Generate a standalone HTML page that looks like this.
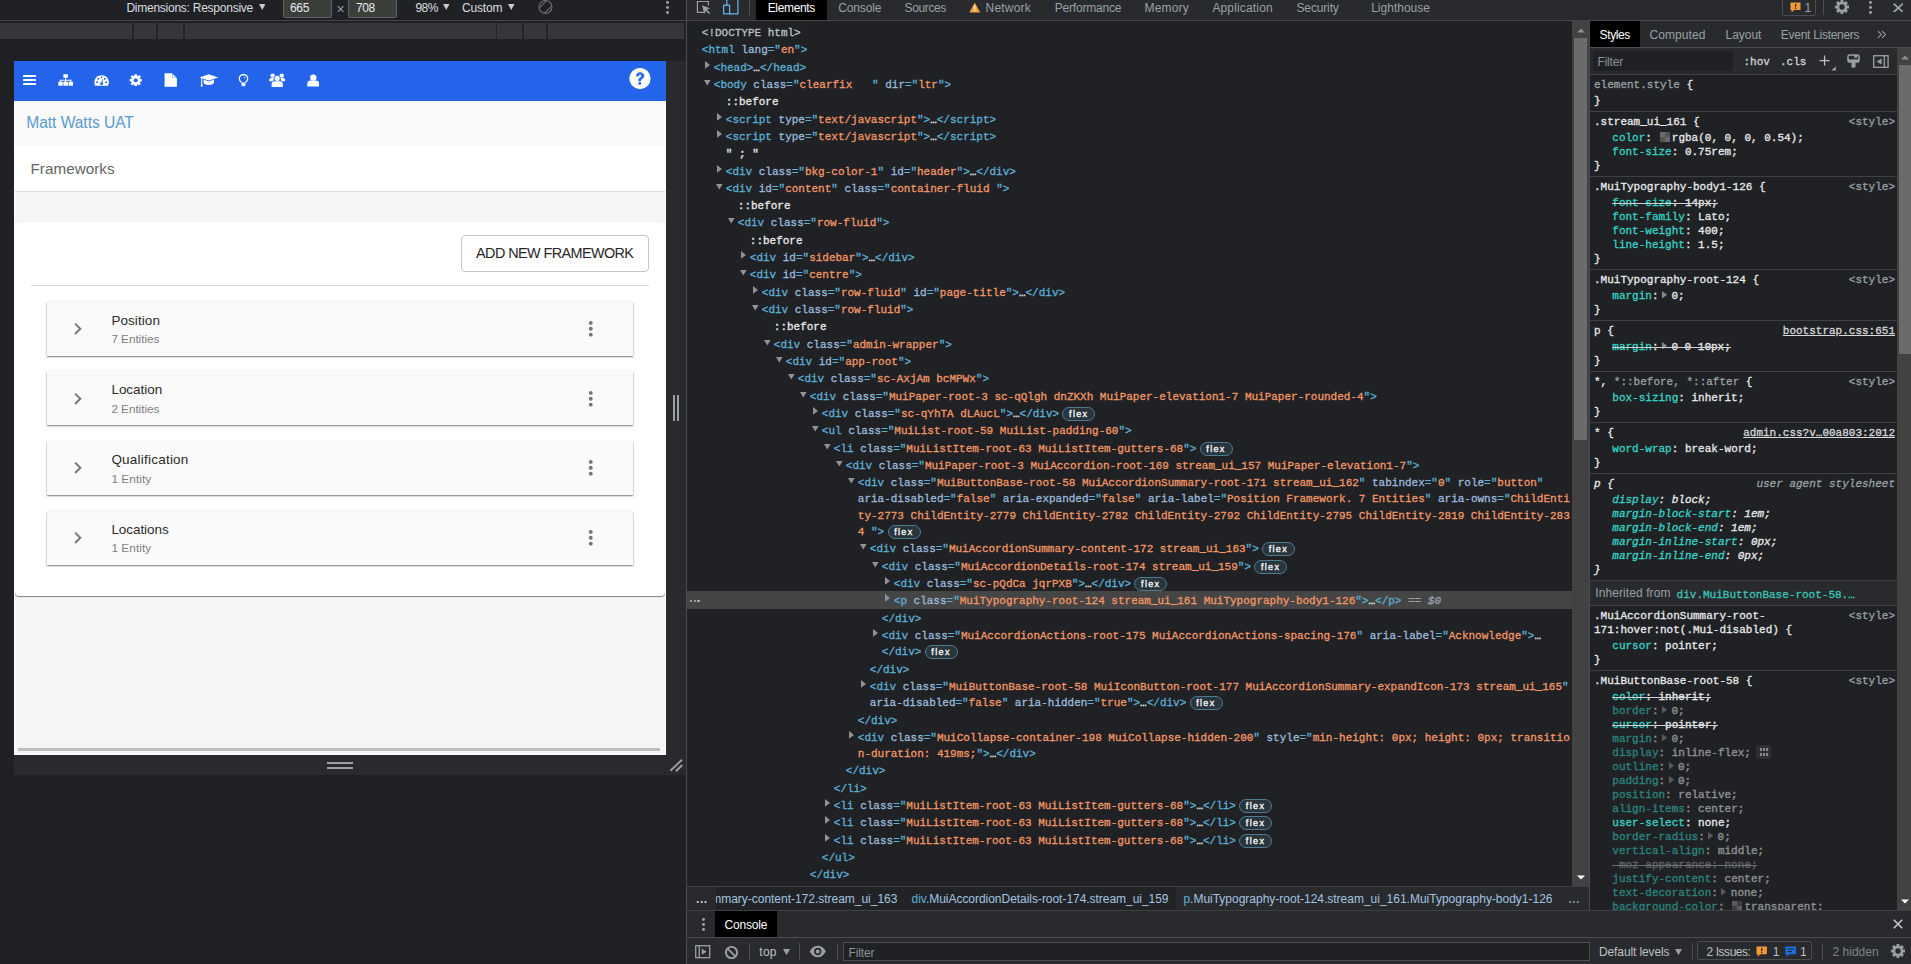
<!DOCTYPE html>
<html><head><meta charset="utf-8"><title>DevTools</title><style>
html,body{margin:0;padding:0;}
body{width:1911px;height:964px;overflow:hidden;background:#202124;position:relative;font-family:"Liberation Sans", sans-serif;}
.a{position:absolute;display:block;white-space:pre;}
.s{font-family:"Liberation Sans", sans-serif;}
.m{font-family:"Liberation Mono", monospace;-webkit-text-stroke:0.3px;}
i.tg{font-style:normal;color:#5db0d7} i.an{font-style:normal;color:#9bbbdc} i.av{font-style:normal;color:#f29766} i.tx{font-style:normal;color:#e8eaed}
i.pn{font-style:inherit;color:#35d4c7} i.pv{font-style:inherit;color:#e8eaed} i.gr{font-style:inherit;color:#9aa0a6}
</style></head><body>
<div class="a" style="left:0px;top:0px;width:686px;height:20px;background:#202124;"></div>
<div class="a" style="left:0px;top:20px;width:1911px;height:1px;background:#45474b;"></div>
<span id="t1" class="a s" style="left:126.40px;top:0.00px;font-size:12px;line-height:16px;color:#dadce0;letter-spacing:-0.248px;">Dimensions: Responsive</span>
<svg class="a" style="left:258.5px;top:4px;" width="6.5" height="6" viewBox="0 0 6.5 6" preserveAspectRatio="none"><path d="M0 0H6.5L3.25 6Z" fill="#c8cacd"/></svg>
<div class="a" style="left:283.4px;top:-3px;width:48.4px;height:20.6px;background:#3b3f3a;border:1px solid #5f6368;border-radius:2px;box-sizing:border-box;"></div>
<span id="t2" class="a s" style="left:290.00px;top:0.00px;font-size:12px;line-height:16px;color:#e8eaed;letter-spacing:-0.344px;">665</span>
<span id="t3" class="a s" style="left:336.50px;top:1.40px;font-size:14px;line-height:16px;color:#9aa0a6;">×</span>
<div class="a" style="left:348.2px;top:-3px;width:48.6px;height:20.6px;background:#3b3f3a;border:1px solid #5f6368;border-radius:2px;box-sizing:border-box;"></div>
<span id="t4" class="a s" style="left:356.00px;top:0.00px;font-size:12px;line-height:16px;color:#e8eaed;letter-spacing:-0.410px;">708</span>
<span id="t5" class="a s" style="left:415.40px;top:0.00px;font-size:12px;line-height:16px;color:#dadce0;letter-spacing:-0.477px;">98%</span>
<svg class="a" style="left:443.4px;top:4px;" width="6.5" height="6" viewBox="0 0 6.5 6" preserveAspectRatio="none"><path d="M0 0H6.5L3.25 6Z" fill="#c8cacd"/></svg>
<span id="t6" class="a s" style="left:462.00px;top:0.00px;font-size:12px;line-height:16px;color:#dadce0;letter-spacing:-0.157px;">Custom</span>
<svg class="a" style="left:508.4px;top:4px;" width="6.5" height="6" viewBox="0 0 6.5 6" preserveAspectRatio="none"><path d="M0 0H6.5L3.25 6Z" fill="#c8cacd"/></svg>
<svg class="a" style="left:537.5px;top:-1.1px;" width="15" height="16" viewBox="0 0 15 16" preserveAspectRatio="none"><g fill="none" stroke="#6e7175" stroke-width="1.1"><circle cx="7.5" cy="8" r="6.5"/><path d="M1.6 8.6L8.6 1.7M6.4 14.3L13.4 7.4"/></g></svg>
<div class="a" style="left:666.1px;top:1.1px;width:2.8px;height:2.8px;background:#9aa0a6;border-radius:50%;"></div>
<div class="a" style="left:666.1px;top:6.199999999999999px;width:2.8px;height:2.8px;background:#9aa0a6;border-radius:50%;"></div>
<div class="a" style="left:666.1px;top:11.2px;width:2.8px;height:2.8px;background:#9aa0a6;border-radius:50%;"></div>
<div class="a" style="left:0px;top:23px;width:684px;height:16px;background:#35363a;"></div>
<div class="a" style="left:132.4px;top:23px;width:1.6px;height:16px;background:#232427;"></div>
<div class="a" style="left:156.4px;top:23px;width:1.6px;height:16px;background:#232427;"></div>
<div class="a" style="left:183.4px;top:23px;width:1.6px;height:16px;background:#232427;"></div>
<div class="a" style="left:495.6px;top:23px;width:1.6px;height:16px;background:#232427;"></div>
<div class="a" style="left:522.4px;top:23px;width:1.6px;height:16px;background:#232427;"></div>
<div class="a" style="left:546.4px;top:23px;width:1.6px;height:16px;background:#232427;"></div>
<div class="a" style="left:666px;top:61px;width:20px;height:714px;background:#292a2d;"></div>
<div class="a" style="left:14px;top:755px;width:652px;height:20px;background:#292a2d;"></div>
<div class="a" style="left:686px;top:0px;width:1px;height:964px;background:#494c50;"></div>
<div class="a" style="left:673.4px;top:395px;width:2px;height:26px;background:#9aa0a6;"></div>
<div class="a" style="left:677px;top:395px;width:2px;height:26px;background:#9aa0a6;"></div>
<div class="a" style="left:327px;top:762.4px;width:26px;height:2px;background:#9aa0a6;"></div>
<div class="a" style="left:327px;top:766.7px;width:26px;height:2px;background:#9aa0a6;"></div>
<svg class="a" style="left:668px;top:757px;" width="16" height="16" viewBox="0 0 16 16" preserveAspectRatio="none"><path d="M2.4 13.8L14 2.7M7.9 14.3L14.3 8.0" stroke="#9aa0a6" stroke-width="1.9" fill="none"/></svg>
<div class="a" style="left:14px;top:61px;width:652px;height:694px;background:#f5f5f5;"></div>
<div class="a" style="left:14px;top:61px;width:652px;height:40px;background:#2464ea;"></div>
<div class="a" style="left:14px;top:101px;width:652px;height:45px;background:#fafafa;"></div>
<div class="a" style="left:14px;top:146px;width:652px;height:45px;background:#ffffff;border-bottom:1px solid #dcdcdc;"></div>
<div class="a" style="left:15px;top:222px;width:650px;height:374px;background:#ffffff;border-radius:4px;box-shadow:0 1px 1px rgba(0,0,0,.45),0 0 1px rgba(0,0,0,.2);"></div>
<div class="a" style="left:30.5px;top:285px;width:618.5px;height:1px;background:#d6d6d6;"></div>
<div class="a" style="left:461px;top:235px;width:188px;height:36.5px;background:#ffffff;border:1px solid #c6c6c6;border-radius:4px;box-sizing:border-box;"></div>
<span id="t7" class="a s" style="left:476.10px;top:245.20px;font-size:14.4px;line-height:16px;color:#262626;letter-spacing:-0.576px;">ADD NEW FRAMEWORK</span>
<span id="t8" class="a s" style="left:26.30px;top:114.60px;font-size:15.6px;line-height:16px;color:#5a9bd0;letter-spacing:-0.057px;">Matt Watts UAT</span>
<span id="t9" class="a s" style="left:30.50px;top:160.80px;font-size:15.2px;line-height:16px;color:#666666;letter-spacing:0.065px;">Frameworks</span>
<div class="a" style="left:23.3px;top:74.9px;width:12.9px;height:2.2px;background:#ffffff;border-radius:.4px;"></div>
<div class="a" style="left:23.3px;top:78.9px;width:12.9px;height:2.2px;background:#ffffff;border-radius:.4px;"></div>
<div class="a" style="left:23.3px;top:82.9px;width:12.9px;height:2.2px;background:#ffffff;border-radius:.4px;"></div>
<svg class="a" style="left:57.6px;top:73.8px;" width="15.3" height="12.2" viewBox="0 0 16 13" preserveAspectRatio="none"><g fill="#ffffff"><rect x="5.6" y="0.3" width="4.8" height="3.8" rx=".4"/><rect x="0.3" y="8.2" width="4.7" height="4.3" rx=".4"/><rect x="5.65" y="8.2" width="4.7" height="4.3" rx=".4"/><rect x="11" y="8.2" width="4.7" height="4.3" rx=".4"/><path d="M7.5 4h1v2.2h5.6v2.2h-1V7.1H8.5v1.3h-1V7.1H2.9v1.3h-1V6.2h5.6z"/></g></svg>
<svg class="a" style="left:93.8px;top:74.7px;" width="15.2" height="11.3" viewBox="0 0 16 12" preserveAspectRatio="none"><path fill="#ffffff" d="M8 0.2A7.6 7.6 0 0 0 1.3 11.5H14.7A7.6 7.6 0 0 0 8 0.2Z"/><g fill="#2464ea"><circle cx="3.2" cy="7.6" r="1"/><circle cx="4.6" cy="4" r="1"/><circle cx="8" cy="2.5" r=".9"/><circle cx="11.4" cy="4" r="1"/><circle cx="12.8" cy="7.6" r="1"/><circle cx="8" cy="9.2" r="1.5"/><path d="M7.6 9L8.6 4.4l.8.2L8.6 9.3z"/></g></svg>
<svg class="a" style="left:129.3px;top:73.5px;" width="13.7" height="12.7" viewBox="0 0 14 13" preserveAspectRatio="none"><path fill="#ffffff" d="M13.17 5.13L13.17 7.67L11.39 7.79L11.06 8.59L12.23 9.94L10.44 11.73L9.09 10.56L8.29 10.89L8.17 12.67L5.63 12.67L5.51 10.89L4.71 10.56L3.36 11.73L1.57 9.94L2.74 8.59L2.41 7.79L0.63 7.67L0.63 5.13L2.41 5.01L2.74 4.21L1.57 2.86L3.36 1.07L4.71 2.24L5.51 1.91L5.63 0.13L8.17 0.13L8.29 1.91L9.09 2.24L10.44 1.07L12.23 2.86L11.06 4.21L11.39 5.01Z"/><circle cx="6.9" cy="6.4" r="2.1" fill="#2464ea"/></svg>
<svg class="a" style="left:164.3px;top:72.8px;" width="13.7" height="14.6" viewBox="0 0 14 15" preserveAspectRatio="none"><path fill="#ffffff" d="M0.6 0.3H8L13.2 5.4V14.2H0.6Z"/><path fill="#2464ea" d="M8.3 0.3V5.1H13.2" opacity=".55"/><path fill="#ffffff" d="M9 1.2V4.5H12.4Z"/></svg>
<svg class="a" style="left:199px;top:73.6px;" width="19.5" height="13" viewBox="0 0 19.5 13" preserveAspectRatio="none"><g fill="#ffffff"><path d="M9.8 0.3L19.2 3.4L9.8 6.5L0.4 3.4Z"/><path d="M4.6 5.6L9.8 7.4L15 5.6V8.6C15 10 12.6 10.9 9.8 10.9S4.6 10 4.6 8.6Z"/><path d="M2.2 4.2h1v5.2l.6 3.2H1.6l.6-3.2z"/></g></svg>
<svg class="a" style="left:238.4px;top:73.6px;" width="11" height="13" viewBox="0 0 11 13" preserveAspectRatio="none"><path fill="none" stroke="#ffffff" stroke-width="1.3" d="M3.6 8.6C2.2 7.4 1.3 6.3 1.3 4.7a4.2 4.2 0 0 1 8.4 0c0 1.6-.9 2.7-2.3 3.9"/><rect x="3.5" y="8.6" width="4" height="3.6" rx="1.2" fill="#ffffff"/><path d="M5.6 3.1a1.8 1.8 0 0 1 1.6 1.5" stroke="#ffffff" stroke-width=".7" fill="none"/></svg>
<svg class="a" style="left:269.3px;top:72.8px;" width="16.4" height="14.6" viewBox="0 0 16.4 14.6" preserveAspectRatio="none"><g fill="#ffffff"><circle cx="3.6" cy="2.6" r="2.2"/><circle cx="12.8" cy="2.6" r="2.2"/><path d="M0.3 8.2V6.6A1.9 1.9 0 0 1 2.2 4.9H5L4 8.2Z"/><path d="M16.1 8.2V6.6A1.9 1.9 0 0 0 14.2 4.9H11.4L12.4 8.2Z"/><circle cx="8.2" cy="5.4" r="2.9" stroke="#2464ea" stroke-width=".5"/><path d="M2.6 14.3V11.2A3 3 0 0 1 5.6 8.3H10.8A3 3 0 0 1 13.8 11.2V14.3Z"/></g></svg>
<svg class="a" style="left:306.6px;top:73.6px;" width="12.6" height="13" viewBox="0 0 12.6 13" preserveAspectRatio="none"><g fill="#ffffff"><circle cx="6.3" cy="3.6" r="3.2"/><path d="M0.3 12.4V9.8A3.4 3.4 0 0 1 3.7 6.4H8.9A3.4 3.4 0 0 1 12.3 9.8V12.4Z"/></g></svg>
<svg class="a" style="left:629px;top:68px;" width="22" height="22" viewBox="0 0 22 22" preserveAspectRatio="none"><circle cx="11" cy="10.6" r="10.6" fill="#ffffff"/><path fill="#2464ea" stroke="#2464ea" stroke-width=".5" d="M7.2 8.1c.2-2.3 1.7-3.6 3.9-3.6 2.3 0 3.9 1.3 3.9 3.3 0 1.4-.7 2.2-1.9 3-.9.6-1.2 1-1.2 1.9v.4H9.6v-.7c0-1.3.5-2.1 1.6-2.8.9-.6 1.3-1 1.3-1.7 0-.8-.6-1.3-1.5-1.3-1 0-1.6.6-1.7 1.6z"/><rect x="9.5" y="14.2" width="2.5" height="2.5" fill="#2464ea"/></svg>
<div class="a" style="left:46.6px;top:301.5px;width:586.6px;height:54px;background:#fafafa;box-shadow:0 1px 1.5px rgba(0,0,0,.5),0 0 1px rgba(0,0,0,.15);"></div>
<svg class="a" style="left:65.9px;top:316.94px;" width="23.52" height="23.52" viewBox="0 0 24 24" preserveAspectRatio="none"><path d="M10 6L8.59 7.41 13.17 12l-4.58 4.59L10 18l6-6z" fill="#757575"/></svg>
<svg class="a" style="left:578.8px;top:316.94px;" width="23.52" height="23.52" viewBox="0 0 24 24" preserveAspectRatio="none"><circle cx="12" cy="6" r="2" fill="#757575"/><circle cx="12" cy="12" r="2" fill="#757575"/><circle cx="12" cy="18" r="2" fill="#757575"/></svg>
<span id="t10" class="a s" style="left:111.40px;top:312.50px;font-size:13.5px;line-height:16px;color:#2b2b2b;letter-spacing:0.071px;">Position</span>
<span id="t11" class="a s" style="left:111.40px;top:331.18px;font-size:11.8px;line-height:16px;color:#7d7d7d;letter-spacing:-0.063px;">7 Entities</span>
<div class="a" style="left:46.6px;top:371.25px;width:586.6px;height:54px;background:#fafafa;box-shadow:0 1px 1.5px rgba(0,0,0,.5),0 0 1px rgba(0,0,0,.15);"></div>
<svg class="a" style="left:65.9px;top:386.69px;" width="23.52" height="23.52" viewBox="0 0 24 24" preserveAspectRatio="none"><path d="M10 6L8.59 7.41 13.17 12l-4.58 4.59L10 18l6-6z" fill="#757575"/></svg>
<svg class="a" style="left:578.8px;top:386.69px;" width="23.52" height="23.52" viewBox="0 0 24 24" preserveAspectRatio="none"><circle cx="12" cy="6" r="2" fill="#757575"/><circle cx="12" cy="12" r="2" fill="#757575"/><circle cx="12" cy="18" r="2" fill="#757575"/></svg>
<span id="t12" class="a s" style="left:111.40px;top:382.25px;font-size:13.5px;line-height:16px;color:#2b2b2b;letter-spacing:-0.018px;">Location</span>
<span id="t13" class="a s" style="left:111.40px;top:400.93px;font-size:11.8px;line-height:16px;color:#7d7d7d;letter-spacing:-0.063px;">2 Entities</span>
<div class="a" style="left:46.6px;top:441.0px;width:586.6px;height:54px;background:#fafafa;box-shadow:0 1px 1.5px rgba(0,0,0,.5),0 0 1px rgba(0,0,0,.15);"></div>
<svg class="a" style="left:65.9px;top:456.44px;" width="23.52" height="23.52" viewBox="0 0 24 24" preserveAspectRatio="none"><path d="M10 6L8.59 7.41 13.17 12l-4.58 4.59L10 18l6-6z" fill="#757575"/></svg>
<svg class="a" style="left:578.8px;top:456.44px;" width="23.52" height="23.52" viewBox="0 0 24 24" preserveAspectRatio="none"><circle cx="12" cy="6" r="2" fill="#757575"/><circle cx="12" cy="12" r="2" fill="#757575"/><circle cx="12" cy="18" r="2" fill="#757575"/></svg>
<span id="t14" class="a s" style="left:111.40px;top:452.00px;font-size:13.5px;line-height:16px;color:#2b2b2b;letter-spacing:0.223px;">Qualification</span>
<span id="t15" class="a s" style="left:111.40px;top:470.68px;font-size:11.8px;line-height:16px;color:#7d7d7d;letter-spacing:0.070px;">1 Entity</span>
<div class="a" style="left:46.6px;top:510.75px;width:586.6px;height:54px;background:#fafafa;box-shadow:0 1px 1.5px rgba(0,0,0,.5),0 0 1px rgba(0,0,0,.15);"></div>
<svg class="a" style="left:65.9px;top:526.19px;" width="23.52" height="23.52" viewBox="0 0 24 24" preserveAspectRatio="none"><path d="M10 6L8.59 7.41 13.17 12l-4.58 4.59L10 18l6-6z" fill="#757575"/></svg>
<svg class="a" style="left:578.8px;top:526.19px;" width="23.52" height="23.52" viewBox="0 0 24 24" preserveAspectRatio="none"><circle cx="12" cy="6" r="2" fill="#757575"/><circle cx="12" cy="12" r="2" fill="#757575"/><circle cx="12" cy="18" r="2" fill="#757575"/></svg>
<span id="t16" class="a s" style="left:111.40px;top:521.75px;font-size:13.5px;line-height:16px;color:#2b2b2b;letter-spacing:-0.066px;">Locations</span>
<span id="t17" class="a s" style="left:111.40px;top:540.43px;font-size:11.8px;line-height:16px;color:#7d7d7d;letter-spacing:0.070px;">1 Entity</span>
<div class="a" style="left:18px;top:748px;width:642px;height:2.9px;background:#bdbdbd;"></div>
<div class="a" style="left:14px;top:101px;width:1px;height:654px;background:#ffffff;"></div>
<div class="a" style="left:665px;top:101px;width:1px;height:654px;background:#ffffff;"></div>
<div class="a" style="left:14px;top:754px;width:652px;height:1px;background:#ffffff;"></div>
<div class="a" style="left:687px;top:0px;width:1224px;height:20px;background:#292a2d;"></div>
<svg class="a" style="left:696px;top:0px;" width="16" height="15" viewBox="0 0 16 15" preserveAspectRatio="none"><path d="M8.2 12.4H1.4V1.5H12.4V5.6" fill="none" stroke="#9aa0a6" stroke-width="1.2"/><path d="M6 5.2L14.2 8.3L10.9 9.6L14 12.9L12.9 14L9.7 10.8L8.4 14Z" fill="#9aa0a6"/></svg>
<svg class="a" style="left:722px;top:-4px;" width="18" height="19" viewBox="0 0 18 19" preserveAspectRatio="none"><g fill="none" stroke="#6bb5ea" stroke-width="1.2"><rect x="1.6" y="9.2" width="6" height="8.6"/><path d="M4.8 9.2V0H15.9V17.8H7.6"/></g></svg>
<div class="a" style="left:749px;top:0px;width:1px;height:15px;background:#494c50;"></div>
<div class="a" style="left:756px;top:0px;width:71px;height:20px;background:#000;"></div>
<span id="t18" class="a s" style="left:767.70px;top:0.00px;font-size:12px;line-height:16px;color:#ffffff;letter-spacing:-0.341px;">Elements</span>
<span id="t19" class="a s" style="left:838.30px;top:0.00px;font-size:12px;line-height:16px;color:#9aa0a6;letter-spacing:-0.162px;">Console</span>
<span id="t20" class="a s" style="left:904.50px;top:0.00px;font-size:12px;line-height:16px;color:#9aa0a6;letter-spacing:-0.362px;">Sources</span>
<span id="t21" class="a s" style="left:985.60px;top:0.00px;font-size:12px;line-height:16px;color:#9aa0a6;letter-spacing:0.198px;">Network</span>
<span id="t22" class="a s" style="left:1054.80px;top:0.00px;font-size:12px;line-height:16px;color:#9aa0a6;letter-spacing:-0.200px;">Performance</span>
<span id="t23" class="a s" style="left:1144.60px;top:0.00px;font-size:12px;line-height:16px;color:#9aa0a6;letter-spacing:0.143px;">Memory</span>
<span id="t24" class="a s" style="left:1212.40px;top:0.00px;font-size:12px;line-height:16px;color:#9aa0a6;letter-spacing:0.153px;">Application</span>
<span id="t25" class="a s" style="left:1296.50px;top:0.00px;font-size:12px;line-height:16px;color:#9aa0a6;letter-spacing:-0.145px;">Security</span>
<span id="t26" class="a s" style="left:1371.20px;top:0.00px;font-size:12px;line-height:16px;color:#9aa0a6;letter-spacing:0.008px;">Lighthouse</span>
<svg class="a" style="left:969.2px;top:1.5px;" width="11.5" height="11" viewBox="0 0 11.5 11" preserveAspectRatio="none"><path d="M5.75 0.4L11.2 10.4H0.3Z" fill="#f0a13a"/><rect x="5.2" y="3.6" width="1.1" height="3.8" fill="#fff"/><rect x="5.2" y="8.1" width="1.1" height="1.1" fill="#fff"/></svg>
<div class="a" style="left:1782.4px;top:-3px;width:34px;height:18.6px;border:1px solid #494c50;border-radius:2px;box-sizing:border-box;"></div>
<svg class="a" style="left:1789.5px;top:1.5px;" width="11" height="11" viewBox="0 0 11 11" preserveAspectRatio="none"><path d="M0.5 0.5H10.5V8H4L1.6 10.4V8H0.5Z" fill="#f29a38"/><rect x="5" y="1.8" width="1.2" height="3.4" fill="#292a2d"/><rect x="5" y="5.9" width="1.2" height="1.2" fill="#292a2d"/></svg>
<span id="t27" class="a s" style="left:1804.50px;top:0.00px;font-size:12px;line-height:16px;color:#9aa0a6;">1</span>
<div class="a" style="left:1823px;top:0px;width:1px;height:15px;background:#494c50;"></div>
<svg class="a" style="left:1834px;top:-1.3px;" width="16" height="16" viewBox="0 0 16 16" preserveAspectRatio="none"><path fill="#9aa0a6" d="M15.01 6.58L15.01 9.42L13.06 9.57L12.69 10.47L13.96 11.95L11.95 13.96L10.47 12.69L9.57 13.06L9.42 15.01L6.58 15.01L6.43 13.06L5.53 12.69L4.05 13.96L2.04 11.95L3.31 10.47L2.94 9.57L0.99 9.42L0.99 6.58L2.94 6.43L3.31 5.53L2.04 4.05L4.05 2.04L5.53 3.31L6.43 2.94L6.58 0.99L9.42 0.99L9.57 2.94L10.47 3.31L11.95 2.04L13.96 4.05L12.69 5.53L13.06 6.43Z"/><circle cx="8" cy="8" r="2.7" fill="#292a2d"/></svg>
<div class="a" style="left:1869px;top:0.8000000000000003px;width:2.8px;height:2.8px;background:#9aa0a6;border-radius:50%;"></div>
<div class="a" style="left:1869px;top:6.0px;width:2.8px;height:2.8px;background:#9aa0a6;border-radius:50%;"></div>
<div class="a" style="left:1869px;top:11.2px;width:2.8px;height:2.8px;background:#9aa0a6;border-radius:50%;"></div>
<svg class="a" style="left:1892.6px;top:2.6px;" width="10.6" height="9.8" viewBox="0 0 10.6 9.8" preserveAspectRatio="none"><path d="M0.6 0.6L10 9.2M10 0.6L0.6 9.2" stroke="#9aa0a6" stroke-width="1.8"/></svg>
<div class="a" style="left:687px;top:591px;width:885.5px;height:18px;background:#454545;"></div>
<div class="a" style="left:690.2px;top:599.6px;width:2.2px;height:2.2px;background:#b4b7bb;border-radius:50%"></div>
<div class="a" style="left:693.8000000000001px;top:599.6px;width:2.2px;height:2.2px;background:#b4b7bb;border-radius:50%"></div>
<div class="a" style="left:697.4000000000001px;top:599.6px;width:2.2px;height:2.2px;background:#b4b7bb;border-radius:50%"></div>
<span id="t28" class="a m" style="left:701.80px;top:25.00px;font-size:11px;line-height:16px;color:#e8eaed;letter-spacing:-0.009px;"><i style="font-style:normal;color:#bdc1c6">&lt;!DOCTYPE html&gt;</i></span>
<span id="t29" class="a m" style="left:701.80px;top:42.00px;font-size:11px;line-height:16px;color:#e8eaed;letter-spacing:-0.009px;"><i class="tg">&lt;html</i> <i class="an">lang</i><i class="tg">="</i><i class="av">en</i><i class="tg">"</i><i class="tg">&gt;</i></span>
<span id="t30" class="a m" style="left:713.80px;top:60.00px;font-size:11px;line-height:16px;color:#e8eaed;letter-spacing:-0.009px;"><i class="tg">&lt;head&gt;</i><i class="tx">…</i><i class="tg">&lt;/head&gt;</i></span>
<svg class="a" style="left:705.0px;top:61.1px;" width="6" height="8" viewBox="0 0 6 8" preserveAspectRatio="none"><path d="M0 0L5.0 3.9L0 7.8Z" fill="#8f9398"/></svg>
<span id="t31" class="a m" style="left:713.80px;top:77.00px;font-size:11px;line-height:16px;color:#e8eaed;letter-spacing:-0.009px;"><i class="tg">&lt;body</i> <i class="an">class</i><i class="tg">="</i><i class="av">clearfix   </i><i class="tg">"</i> <i class="an">dir</i><i class="tg">="</i><i class="av">ltr</i><i class="tg">"</i><i class="tg">&gt;</i></span>
<svg class="a" style="left:703.9px;top:79.8px;" width="8" height="6" viewBox="0 0 8 6" preserveAspectRatio="none"><path d="M0 0H6.6L3.3 5.4Z" fill="#8f9398"/></svg>
<span id="t32" class="a m" style="left:725.80px;top:94.00px;font-size:11px;line-height:16px;color:#e8eaed;letter-spacing:-0.009px;"><i class="tx">::before</i></span>
<span id="t33" class="a m" style="left:725.80px;top:112.00px;font-size:11px;line-height:16px;color:#e8eaed;letter-spacing:-0.009px;"><i class="tg">&lt;script</i> <i class="an">type</i><i class="tg">="</i><i class="av">text/javascript</i><i class="tg">"</i><i class="tg">&gt;</i><i class="tx">…</i><i class="tg">&lt;/script&gt;</i></span>
<svg class="a" style="left:717.0px;top:113.1px;" width="6" height="8" viewBox="0 0 6 8" preserveAspectRatio="none"><path d="M0 0L5.0 3.9L0 7.8Z" fill="#8f9398"/></svg>
<span id="t34" class="a m" style="left:725.80px;top:129.00px;font-size:11px;line-height:16px;color:#e8eaed;letter-spacing:-0.009px;"><i class="tg">&lt;script</i> <i class="an">type</i><i class="tg">="</i><i class="av">text/javascript</i><i class="tg">"</i><i class="tg">&gt;</i><i class="tx">…</i><i class="tg">&lt;/script&gt;</i></span>
<svg class="a" style="left:717.0px;top:130.1px;" width="6" height="8" viewBox="0 0 6 8" preserveAspectRatio="none"><path d="M0 0L5.0 3.9L0 7.8Z" fill="#8f9398"/></svg>
<span id="t35" class="a m" style="left:725.80px;top:146.00px;font-size:11px;line-height:16px;color:#e8eaed;letter-spacing:-0.009px;"><i class="tx">" ; "</i></span>
<span id="t36" class="a m" style="left:725.80px;top:164.00px;font-size:11px;line-height:16px;color:#e8eaed;letter-spacing:-0.009px;"><i class="tg">&lt;div</i> <i class="an">class</i><i class="tg">="</i><i class="av">bkg-color-1</i><i class="tg">"</i> <i class="an">id</i><i class="tg">="</i><i class="av">header</i><i class="tg">"</i><i class="tg">&gt;</i><i class="tx">…</i><i class="tg">&lt;/div&gt;</i></span>
<svg class="a" style="left:717.0px;top:165.1px;" width="6" height="8" viewBox="0 0 6 8" preserveAspectRatio="none"><path d="M0 0L5.0 3.9L0 7.8Z" fill="#8f9398"/></svg>
<span id="t37" class="a m" style="left:725.80px;top:181.00px;font-size:11px;line-height:16px;color:#e8eaed;letter-spacing:-0.009px;"><i class="tg">&lt;div</i> <i class="an">id</i><i class="tg">="</i><i class="av">content</i><i class="tg">"</i> <i class="an">class</i><i class="tg">="</i><i class="av">container-fluid </i><i class="tg">"</i><i class="tg">&gt;</i></span>
<svg class="a" style="left:715.9px;top:183.8px;" width="8" height="6" viewBox="0 0 8 6" preserveAspectRatio="none"><path d="M0 0H6.6L3.3 5.4Z" fill="#8f9398"/></svg>
<span id="t38" class="a m" style="left:737.80px;top:198.00px;font-size:11px;line-height:16px;color:#e8eaed;letter-spacing:-0.009px;"><i class="tx">::before</i></span>
<span id="t39" class="a m" style="left:737.80px;top:215.00px;font-size:11px;line-height:16px;color:#e8eaed;letter-spacing:-0.009px;"><i class="tg">&lt;div</i> <i class="an">class</i><i class="tg">="</i><i class="av">row-fluid</i><i class="tg">"</i><i class="tg">&gt;</i></span>
<svg class="a" style="left:727.9px;top:217.8px;" width="8" height="6" viewBox="0 0 8 6" preserveAspectRatio="none"><path d="M0 0H6.6L3.3 5.4Z" fill="#8f9398"/></svg>
<span id="t40" class="a m" style="left:749.80px;top:233.00px;font-size:11px;line-height:16px;color:#e8eaed;letter-spacing:-0.009px;"><i class="tx">::before</i></span>
<span id="t41" class="a m" style="left:749.80px;top:250.00px;font-size:11px;line-height:16px;color:#e8eaed;letter-spacing:-0.009px;"><i class="tg">&lt;div</i> <i class="an">id</i><i class="tg">="</i><i class="av">sidebar</i><i class="tg">"</i><i class="tg">&gt;</i><i class="tx">…</i><i class="tg">&lt;/div&gt;</i></span>
<svg class="a" style="left:741.0px;top:251.1px;" width="6" height="8" viewBox="0 0 6 8" preserveAspectRatio="none"><path d="M0 0L5.0 3.9L0 7.8Z" fill="#8f9398"/></svg>
<span id="t42" class="a m" style="left:749.80px;top:267.00px;font-size:11px;line-height:16px;color:#e8eaed;letter-spacing:-0.009px;"><i class="tg">&lt;div</i> <i class="an">id</i><i class="tg">="</i><i class="av">centre</i><i class="tg">"</i><i class="tg">&gt;</i></span>
<svg class="a" style="left:739.9px;top:269.8px;" width="8" height="6" viewBox="0 0 8 6" preserveAspectRatio="none"><path d="M0 0H6.6L3.3 5.4Z" fill="#8f9398"/></svg>
<span id="t43" class="a m" style="left:761.80px;top:285.00px;font-size:11px;line-height:16px;color:#e8eaed;letter-spacing:-0.009px;"><i class="tg">&lt;div</i> <i class="an">class</i><i class="tg">="</i><i class="av">row-fluid</i><i class="tg">"</i> <i class="an">id</i><i class="tg">="</i><i class="av">page-title</i><i class="tg">"</i><i class="tg">&gt;</i><i class="tx">…</i><i class="tg">&lt;/div&gt;</i></span>
<svg class="a" style="left:753.0px;top:286.1px;" width="6" height="8" viewBox="0 0 6 8" preserveAspectRatio="none"><path d="M0 0L5.0 3.9L0 7.8Z" fill="#8f9398"/></svg>
<span id="t44" class="a m" style="left:761.80px;top:302.00px;font-size:11px;line-height:16px;color:#e8eaed;letter-spacing:-0.009px;"><i class="tg">&lt;div</i> <i class="an">class</i><i class="tg">="</i><i class="av">row-fluid</i><i class="tg">"</i><i class="tg">&gt;</i></span>
<svg class="a" style="left:751.9px;top:304.8px;" width="8" height="6" viewBox="0 0 8 6" preserveAspectRatio="none"><path d="M0 0H6.6L3.3 5.4Z" fill="#8f9398"/></svg>
<span id="t45" class="a m" style="left:773.80px;top:319.00px;font-size:11px;line-height:16px;color:#e8eaed;letter-spacing:-0.009px;"><i class="tx">::before</i></span>
<span id="t46" class="a m" style="left:773.80px;top:337.00px;font-size:11px;line-height:16px;color:#e8eaed;letter-spacing:-0.009px;"><i class="tg">&lt;div</i> <i class="an">class</i><i class="tg">="</i><i class="av">admin-wrapper</i><i class="tg">"</i><i class="tg">&gt;</i></span>
<svg class="a" style="left:763.9px;top:339.8px;" width="8" height="6" viewBox="0 0 8 6" preserveAspectRatio="none"><path d="M0 0H6.6L3.3 5.4Z" fill="#8f9398"/></svg>
<span id="t47" class="a m" style="left:785.80px;top:354.00px;font-size:11px;line-height:16px;color:#e8eaed;letter-spacing:-0.009px;"><i class="tg">&lt;div</i> <i class="an">id</i><i class="tg">="</i><i class="av">app-root</i><i class="tg">"</i><i class="tg">&gt;</i></span>
<svg class="a" style="left:775.9px;top:356.8px;" width="8" height="6" viewBox="0 0 8 6" preserveAspectRatio="none"><path d="M0 0H6.6L3.3 5.4Z" fill="#8f9398"/></svg>
<span id="t48" class="a m" style="left:797.80px;top:371.00px;font-size:11px;line-height:16px;color:#e8eaed;letter-spacing:-0.009px;"><i class="tg">&lt;div</i> <i class="an">class</i><i class="tg">="</i><i class="av">sc-AxjAm bcMPWx</i><i class="tg">"</i><i class="tg">&gt;</i></span>
<svg class="a" style="left:787.9px;top:373.8px;" width="8" height="6" viewBox="0 0 8 6" preserveAspectRatio="none"><path d="M0 0H6.6L3.3 5.4Z" fill="#8f9398"/></svg>
<span id="t49" class="a m" style="left:809.80px;top:389.00px;font-size:11px;line-height:16px;color:#e8eaed;letter-spacing:-0.009px;"><i class="tg">&lt;div</i> <i class="an">class</i><i class="tg">="</i><i class="av">MuiPaper-root-3 sc-qQlgh dnZKXh MuiPaper-elevation1-7 MuiPaper-rounded-4</i><i class="tg">"</i><i class="tg">&gt;</i></span>
<svg class="a" style="left:799.9px;top:391.8px;" width="8" height="6" viewBox="0 0 8 6" preserveAspectRatio="none"><path d="M0 0H6.6L3.3 5.4Z" fill="#8f9398"/></svg>
<span id="t50" class="a m" style="left:821.80px;top:406.00px;font-size:11px;line-height:16px;color:#e8eaed;letter-spacing:-0.009px;"><i class="tg">&lt;div</i> <i class="an">class</i><i class="tg">="</i><i class="av">sc-qYhTA dLAucL</i><i class="tg">"</i><i class="tg">&gt;</i><i class="tx">…</i><i class="tg">&lt;/div&gt;</i></span>
<svg class="a" style="left:813.0px;top:407.1px;" width="6" height="8" viewBox="0 0 6 8" preserveAspectRatio="none"><path d="M0 0L5.0 3.9L0 7.8Z" fill="#8f9398"/></svg>
<div class="a" style="left:1062.476px;top:406.9px;width:33px;height:14px;background:#28353d;border:1px solid #4f7b91;border-radius:7px;box-sizing:border-box;"></div>
<span id="t51" class="a s" style="left:1069.08px;top:408.00px;font-size:9px;line-height:12px;color:#ffffff;letter-spacing:1.346px;-webkit-text-stroke:0.3px;">flex</span>
<span id="t52" class="a m" style="left:821.80px;top:423.00px;font-size:11px;line-height:16px;color:#e8eaed;letter-spacing:-0.009px;"><i class="tg">&lt;ul</i> <i class="an">class</i><i class="tg">="</i><i class="av">MuiList-root-59 MuiList-padding-60</i><i class="tg">"</i><i class="tg">&gt;</i></span>
<svg class="a" style="left:811.9px;top:425.8px;" width="8" height="6" viewBox="0 0 8 6" preserveAspectRatio="none"><path d="M0 0H6.6L3.3 5.4Z" fill="#8f9398"/></svg>
<span id="t53" class="a m" style="left:833.80px;top:441.00px;font-size:11px;line-height:16px;color:#e8eaed;letter-spacing:-0.009px;"><i class="tg">&lt;li</i> <i class="an">class</i><i class="tg">="</i><i class="av">MuiListItem-root-63 MuiListItem-gutters-68</i><i class="tg">"</i><i class="tg">&gt;</i></span>
<svg class="a" style="left:823.9px;top:443.8px;" width="8" height="6" viewBox="0 0 8 6" preserveAspectRatio="none"><path d="M0 0H6.6L3.3 5.4Z" fill="#8f9398"/></svg>
<div class="a" style="left:1199.705px;top:441.9px;width:33px;height:14px;background:#28353d;border:1px solid #4f7b91;border-radius:7px;box-sizing:border-box;"></div>
<span id="t54" class="a s" style="left:1206.30px;top:443.00px;font-size:9px;line-height:12px;color:#ffffff;letter-spacing:1.346px;-webkit-text-stroke:0.3px;">flex</span>
<span id="t55" class="a m" style="left:845.80px;top:458.00px;font-size:11px;line-height:16px;color:#e8eaed;letter-spacing:-0.009px;"><i class="tg">&lt;div</i> <i class="an">class</i><i class="tg">="</i><i class="av">MuiPaper-root-3 MuiAccordion-root-169 stream_ui_157 MuiPaper-elevation1-7</i><i class="tg">"</i><i class="tg">&gt;</i></span>
<svg class="a" style="left:835.9px;top:460.8px;" width="8" height="6" viewBox="0 0 8 6" preserveAspectRatio="none"><path d="M0 0H6.6L3.3 5.4Z" fill="#8f9398"/></svg>
<span id="t56" class="a m" style="left:857.80px;top:475.00px;font-size:11px;line-height:16px;color:#e8eaed;letter-spacing:-0.009px;"><i class="tg">&lt;div</i> <i class="an">class</i><i class="tg">="</i><i class="av">MuiButtonBase-root-58 MuiAccordionSummary-root-171 stream_ui_162</i><i class="tg">"</i> <i class="an">tabindex</i><i class="tg">="</i><i class="av">0</i><i class="tg">"</i> <i class="an">role</i><i class="tg">="</i><i class="av">button</i><i class="tg">"</i></span>
<svg class="a" style="left:847.9px;top:477.8px;" width="8" height="6" viewBox="0 0 8 6" preserveAspectRatio="none"><path d="M0 0H6.6L3.3 5.4Z" fill="#8f9398"/></svg>
<span id="t57" class="a m" style="left:857.80px;top:491.00px;font-size:11px;line-height:16px;color:#e8eaed;letter-spacing:-0.009px;"><i class="an">aria-disabled</i><i class="tg">="</i><i class="av">false</i><i class="tg">"</i> <i class="an">aria-expanded</i><i class="tg">="</i><i class="av">false</i><i class="tg">"</i> <i class="an">aria-label</i><i class="tg">="</i><i class="av">Position Framework. 7 Entities</i><i class="tg">"</i> <i class="an">aria-owns</i><i class="tg">="</i><i class="av">ChildEnti</i></span>
<span id="t58" class="a m" style="left:857.80px;top:508.00px;font-size:11px;line-height:16px;color:#e8eaed;letter-spacing:-0.009px;"><i class="av">ty-2773 ChildEntity-2779 ChildEntity-2782 ChildEntity-2792 ChildEntity-2795 ChildEntity-2819 ChildEntity-283</i></span>
<span id="t59" class="a m" style="left:857.80px;top:524.00px;font-size:11px;line-height:16px;color:#e8eaed;letter-spacing:-0.009px;"><i class="av">4 </i><i class="tg">"&gt;</i></span>
<div class="a" style="left:887.564px;top:524.9px;width:33px;height:14px;background:#28353d;border:1px solid #4f7b91;border-radius:7px;box-sizing:border-box;"></div>
<span id="t60" class="a s" style="left:894.16px;top:526.00px;font-size:9px;line-height:12px;color:#ffffff;letter-spacing:1.346px;-webkit-text-stroke:0.3px;">flex</span>
<span id="t61" class="a m" style="left:869.80px;top:541.00px;font-size:11px;line-height:16px;color:#e8eaed;letter-spacing:-0.009px;"><i class="tg">&lt;div</i> <i class="an">class</i><i class="tg">="</i><i class="av">MuiAccordionSummary-content-172 stream_ui_163</i><i class="tg">"</i><i class="tg">&gt;</i></span>
<svg class="a" style="left:859.9px;top:543.8px;" width="8" height="6" viewBox="0 0 8 6" preserveAspectRatio="none"><path d="M0 0H6.6L3.3 5.4Z" fill="#8f9398"/></svg>
<div class="a" style="left:1262.069px;top:541.9px;width:33px;height:14px;background:#28353d;border:1px solid #4f7b91;border-radius:7px;box-sizing:border-box;"></div>
<span id="t62" class="a s" style="left:1268.67px;top:543.00px;font-size:9px;line-height:12px;color:#ffffff;letter-spacing:1.346px;-webkit-text-stroke:0.3px;">flex</span>
<span id="t63" class="a m" style="left:881.80px;top:559.00px;font-size:11px;line-height:16px;color:#e8eaed;letter-spacing:-0.009px;"><i class="tg">&lt;div</i> <i class="an">class</i><i class="tg">="</i><i class="av">MuiAccordionDetails-root-174 stream_ui_159</i><i class="tg">"</i><i class="tg">&gt;</i></span>
<svg class="a" style="left:871.9px;top:561.8px;" width="8" height="6" viewBox="0 0 8 6" preserveAspectRatio="none"><path d="M0 0H6.6L3.3 5.4Z" fill="#8f9398"/></svg>
<div class="a" style="left:1254.296px;top:559.9px;width:33px;height:14px;background:#28353d;border:1px solid #4f7b91;border-radius:7px;box-sizing:border-box;"></div>
<span id="t64" class="a s" style="left:1260.90px;top:561.00px;font-size:9px;line-height:12px;color:#ffffff;letter-spacing:1.346px;-webkit-text-stroke:0.3px;">flex</span>
<span id="t65" class="a m" style="left:893.80px;top:576.00px;font-size:11px;line-height:16px;color:#e8eaed;letter-spacing:-0.009px;"><i class="tg">&lt;div</i> <i class="an">class</i><i class="tg">="</i><i class="av">sc-pQdCa jqrPXB</i><i class="tg">"</i><i class="tg">&gt;</i><i class="tx">…</i><i class="tg">&lt;/div&gt;</i></span>
<svg class="a" style="left:885.0px;top:577.1px;" width="6" height="8" viewBox="0 0 6 8" preserveAspectRatio="none"><path d="M0 0L5.0 3.9L0 7.8Z" fill="#8f9398"/></svg>
<div class="a" style="left:1134.476px;top:576.9px;width:33px;height:14px;background:#28353d;border:1px solid #4f7b91;border-radius:7px;box-sizing:border-box;"></div>
<span id="t66" class="a s" style="left:1141.08px;top:578.00px;font-size:9px;line-height:12px;color:#ffffff;letter-spacing:1.346px;-webkit-text-stroke:0.3px;">flex</span>
<span id="t67" class="a m" style="left:893.80px;top:593.00px;font-size:11px;line-height:16px;color:#e8eaed;letter-spacing:-0.009px;"><i class="tg">&lt;p</i> <i class="an">class</i><i class="tg">="</i><i class="av">MuiTypography-root-124 stream_ui_161 MuiTypography-body1-126</i><i class="tg">"</i><i class="tg">&gt;</i><i class="tx">…</i><i class="tg">&lt;/p&gt;</i><i class="gr" style="font-style:normal"> == </i><i class="gr" style="font-style:italic">$0</i></span>
<svg class="a" style="left:885.0px;top:594.1px;" width="6" height="8" viewBox="0 0 6 8" preserveAspectRatio="none"><path d="M0 0L5.0 3.9L0 7.8Z" fill="#8f9398"/></svg>
<span id="t68" class="a m" style="left:881.80px;top:611.00px;font-size:11px;line-height:16px;color:#e8eaed;letter-spacing:-0.009px;"><i class="tg">&lt;/div&gt;</i></span>
<span id="t69" class="a m" style="left:881.80px;top:628.00px;font-size:11px;line-height:16px;color:#e8eaed;letter-spacing:-0.009px;"><i class="tg">&lt;div</i> <i class="an">class</i><i class="tg">="</i><i class="av">MuiAccordionActions-root-175 MuiAccordionActions-spacing-176</i><i class="tg">"</i> <i class="an">aria-label</i><i class="tg">="</i><i class="av">Acknowledge</i><i class="tg">"</i><i class="tg">&gt;</i><i class="tx">…</i></span>
<svg class="a" style="left:873.0px;top:629.1px;" width="6" height="8" viewBox="0 0 6 8" preserveAspectRatio="none"><path d="M0 0L5.0 3.9L0 7.8Z" fill="#8f9398"/></svg>
<span id="t70" class="a m" style="left:881.80px;top:644.00px;font-size:11px;line-height:16px;color:#e8eaed;letter-spacing:-0.009px;"><i class="tg">&lt;/div&gt;</i></span>
<div class="a" style="left:924.746px;top:644.9px;width:33px;height:14px;background:#28353d;border:1px solid #4f7b91;border-radius:7px;box-sizing:border-box;"></div>
<span id="t71" class="a s" style="left:931.35px;top:646.00px;font-size:9px;line-height:12px;color:#ffffff;letter-spacing:1.346px;-webkit-text-stroke:0.3px;">flex</span>
<span id="t72" class="a m" style="left:869.80px;top:662.00px;font-size:11px;line-height:16px;color:#e8eaed;letter-spacing:-0.009px;"><i class="tg">&lt;/div&gt;</i></span>
<span id="t73" class="a m" style="left:869.80px;top:679.00px;font-size:11px;line-height:16px;color:#e8eaed;letter-spacing:-0.009px;"><i class="tg">&lt;div</i> <i class="an">class</i><i class="tg">="</i><i class="av">MuiButtonBase-root-58 MuiIconButton-root-177 MuiAccordionSummary-expandIcon-173 stream_ui_165</i><i class="tg">"</i></span>
<svg class="a" style="left:861.0px;top:680.1px;" width="6" height="8" viewBox="0 0 6 8" preserveAspectRatio="none"><path d="M0 0L5.0 3.9L0 7.8Z" fill="#8f9398"/></svg>
<span id="t74" class="a m" style="left:869.80px;top:695.00px;font-size:11px;line-height:16px;color:#e8eaed;letter-spacing:-0.009px;"><i class="an">aria-disabled</i><i class="tg">="</i><i class="av">false</i><i class="tg">"</i> <i class="an">aria-hidden</i><i class="tg">="</i><i class="av">true</i><i class="tg">"</i><i class="tg">&gt;</i><i class="tx">…</i><i class="tg">&lt;/div&gt;</i></span>
<div class="a" style="left:1189.568px;top:695.9px;width:33px;height:14px;background:#28353d;border:1px solid #4f7b91;border-radius:7px;box-sizing:border-box;"></div>
<span id="t75" class="a s" style="left:1196.17px;top:697.00px;font-size:9px;line-height:12px;color:#ffffff;letter-spacing:1.346px;-webkit-text-stroke:0.3px;">flex</span>
<span id="t76" class="a m" style="left:857.80px;top:713.00px;font-size:11px;line-height:16px;color:#e8eaed;letter-spacing:-0.009px;"><i class="tg">&lt;/div&gt;</i></span>
<span id="t77" class="a m" style="left:857.80px;top:730.00px;font-size:11px;line-height:16px;color:#e8eaed;letter-spacing:-0.009px;"><i class="tg">&lt;div</i> <i class="an">class</i><i class="tg">="</i><i class="av">MuiCollapse-container-198 MuiCollapse-hidden-200</i><i class="tg">"</i> <i class="an">style</i><i class="tg">="</i><i class="av">min-height: 0px; height: 0px; transitio</i></span>
<svg class="a" style="left:849.0px;top:731.1px;" width="6" height="8" viewBox="0 0 6 8" preserveAspectRatio="none"><path d="M0 0L5.0 3.9L0 7.8Z" fill="#8f9398"/></svg>
<span id="t78" class="a m" style="left:857.80px;top:746.00px;font-size:11px;line-height:16px;color:#e8eaed;letter-spacing:-0.009px;"><i class="av">n-duration: 419ms;</i><i class="tg">"&gt;</i><i class="tx">…</i><i class="tg">&lt;/div&gt;</i></span>
<span id="t79" class="a m" style="left:845.80px;top:763.00px;font-size:11px;line-height:16px;color:#e8eaed;letter-spacing:-0.009px;"><i class="tg">&lt;/div&gt;</i></span>
<span id="t80" class="a m" style="left:833.80px;top:781.00px;font-size:11px;line-height:16px;color:#e8eaed;letter-spacing:-0.009px;"><i class="tg">&lt;/li&gt;</i></span>
<span id="t81" class="a m" style="left:833.80px;top:798.00px;font-size:11px;line-height:16px;color:#e8eaed;letter-spacing:-0.009px;"><i class="tg">&lt;li</i> <i class="an">class</i><i class="tg">="</i><i class="av">MuiListItem-root-63 MuiListItem-gutters-68</i><i class="tg">"</i><i class="tg">&gt;</i><i class="tx">…</i><i class="tg">&lt;/li&gt;</i></span>
<svg class="a" style="left:825.0px;top:799.1px;" width="6" height="8" viewBox="0 0 6 8" preserveAspectRatio="none"><path d="M0 0L5.0 3.9L0 7.8Z" fill="#8f9398"/></svg>
<div class="a" style="left:1239.251px;top:798.9px;width:33px;height:14px;background:#28353d;border:1px solid #4f7b91;border-radius:7px;box-sizing:border-box;"></div>
<span id="t82" class="a s" style="left:1245.85px;top:800.00px;font-size:9px;line-height:12px;color:#ffffff;letter-spacing:1.346px;-webkit-text-stroke:0.3px;">flex</span>
<span id="t83" class="a m" style="left:833.80px;top:815.00px;font-size:11px;line-height:16px;color:#e8eaed;letter-spacing:-0.009px;"><i class="tg">&lt;li</i> <i class="an">class</i><i class="tg">="</i><i class="av">MuiListItem-root-63 MuiListItem-gutters-68</i><i class="tg">"</i><i class="tg">&gt;</i><i class="tx">…</i><i class="tg">&lt;/li&gt;</i></span>
<svg class="a" style="left:825.0px;top:816.1px;" width="6" height="8" viewBox="0 0 6 8" preserveAspectRatio="none"><path d="M0 0L5.0 3.9L0 7.8Z" fill="#8f9398"/></svg>
<div class="a" style="left:1239.251px;top:815.9px;width:33px;height:14px;background:#28353d;border:1px solid #4f7b91;border-radius:7px;box-sizing:border-box;"></div>
<span id="t84" class="a s" style="left:1245.85px;top:817.00px;font-size:9px;line-height:12px;color:#ffffff;letter-spacing:1.346px;-webkit-text-stroke:0.3px;">flex</span>
<span id="t85" class="a m" style="left:833.80px;top:833.00px;font-size:11px;line-height:16px;color:#e8eaed;letter-spacing:-0.009px;"><i class="tg">&lt;li</i> <i class="an">class</i><i class="tg">="</i><i class="av">MuiListItem-root-63 MuiListItem-gutters-68</i><i class="tg">"</i><i class="tg">&gt;</i><i class="tx">…</i><i class="tg">&lt;/li&gt;</i></span>
<svg class="a" style="left:825.0px;top:834.1px;" width="6" height="8" viewBox="0 0 6 8" preserveAspectRatio="none"><path d="M0 0L5.0 3.9L0 7.8Z" fill="#8f9398"/></svg>
<div class="a" style="left:1239.251px;top:833.9px;width:33px;height:14px;background:#28353d;border:1px solid #4f7b91;border-radius:7px;box-sizing:border-box;"></div>
<span id="t86" class="a s" style="left:1245.85px;top:835.00px;font-size:9px;line-height:12px;color:#ffffff;letter-spacing:1.346px;-webkit-text-stroke:0.3px;">flex</span>
<span id="t87" class="a m" style="left:821.80px;top:850.00px;font-size:11px;line-height:16px;color:#e8eaed;letter-spacing:-0.009px;"><i class="tg">&lt;/ul&gt;</i></span>
<span id="t88" class="a m" style="left:809.80px;top:867.00px;font-size:11px;line-height:16px;color:#e8eaed;letter-spacing:-0.009px;"><i class="tg">&lt;/div&gt;</i></span>
<div class="a" style="left:1572px;top:21px;width:16.6px;height:865px;background:#424242;"></div>
<div class="a" style="left:1573.8px;top:38px;width:13.4px;height:402px;background:#6b6b6b;"></div>
<svg class="a" style="left:1576.5px;top:27.5px;" width="8" height="5" viewBox="0 0 8 5" preserveAspectRatio="none"><path d="M0 4.6L4 0.4L8 4.6Z" fill="#8c8c8c"/></svg>
<svg class="a" style="left:1576.5px;top:874.5px;" width="8" height="5" viewBox="0 0 8 5" preserveAspectRatio="none"><path d="M0 0.4L4 4.6L8 0.4Z" fill="#ffffff"/></svg>
<div class="a" style="left:1588.6px;top:21px;width:1.4px;height:890px;background:#494c50;"></div>
<div class="a" style="left:1590px;top:21px;width:321px;height:26px;background:#292a2d;"></div>
<div class="a" style="left:1590px;top:21px;width:50px;height:26px;background:#000;"></div>
<div class="a" style="left:1590px;top:47px;width:321px;height:1px;background:#494c50;"></div>
<span id="t89" class="a s" style="left:1599.60px;top:27.00px;font-size:12px;line-height:16px;color:#fff;letter-spacing:-0.381px;">Styles</span>
<span id="t90" class="a s" style="left:1649.40px;top:27.00px;font-size:12px;line-height:16px;color:#9aa0a6;letter-spacing:0.091px;">Computed</span>
<span id="t91" class="a s" style="left:1725.60px;top:27.00px;font-size:12px;line-height:16px;color:#9aa0a6;letter-spacing:-0.039px;">Layout</span>
<span id="t92" class="a s" style="left:1780.80px;top:27.00px;font-size:12px;line-height:16px;color:#9aa0a6;letter-spacing:-0.281px;">Event Listeners</span>
<svg class="a" style="left:1877.0px;top:29.6px;" width="9.4" height="9" viewBox="0 0 10 10" preserveAspectRatio="none"><path d="M1 1.2L4.6 5L1 8.8M5.4 1.2L9 5L5.4 8.8" stroke="#9aa0a6" stroke-width="1.1" fill="none"/></svg>
<div class="a" style="left:1590px;top:48px;width:307px;height:26px;background:#292a2d;"></div>
<div class="a" style="left:1593px;top:51px;width:139.8px;height:20px;background:#202124;"></div>
<span id="t93" class="a s" style="left:1597.50px;top:54.00px;font-size:12px;line-height:16px;color:#8b9096;letter-spacing:-0.195px;">Filter</span>
<span id="t94" class="a m" style="left:1743.50px;top:54.00px;font-size:11px;line-height:16px;color:#d0d3d7;">:hov</span>
<span id="t95" class="a m" style="left:1780.00px;top:54.00px;font-size:11px;line-height:16px;color:#d0d3d7;">.cls</span>
<svg class="a" style="left:1819.1px;top:55.3px;" width="18" height="17" viewBox="0 0 18 17" preserveAspectRatio="none"><path d="M5.6 0.6V10.6M0.6 5.6H10.6" stroke="#bdc1c6" stroke-width="1.3"/><path d="M16.8 11.2V15.6H12.4Z" fill="#9aa0a6"/></svg>
<svg class="a" style="left:1846.5px;top:54px;" width="13" height="15" viewBox="0 0 13 15" preserveAspectRatio="none"><rect x="1" y="1" width="11" height="7" rx="1.6" fill="none" stroke="#9aa0a6" stroke-width="1.5"/><rect x="7.2" y="1" width="3" height="2.8" fill="#9aa0a6"/><rect x="1" y="5.4" width="11" height="2.8" fill="#9aa0a6"/><rect x="4.5" y="8" width="4" height="5.8" rx="1.3" fill="#9aa0a6"/></svg>
<svg class="a" style="left:1873px;top:55px;" width="16" height="13" viewBox="0 0 16 13" preserveAspectRatio="none"><rect x="0.7" y="0.7" width="14.4" height="11.6" fill="none" stroke="#9aa0a6" stroke-width="1.3"/><path d="M11.3 0.7V12.3" stroke="#9aa0a6" stroke-width="1.3"/><path d="M8.6 3.4V9.6L3.6 6.5Z" fill="#9aa0a6"/></svg>
<div class="a" style="left:1590px;top:74px;width:307px;height:1px;background:#3d3d3d;"></div>
<div class="a" style="left:1897px;top:48px;width:14px;height:862px;background:#424242;"></div>
<div class="a" style="left:1899px;top:65px;width:12px;height:288.5px;background:#6b6b6b;"></div>
<svg class="a" style="left:1900.5px;top:55px;" width="8" height="5" viewBox="0 0 8 5" preserveAspectRatio="none"><path d="M0 4.6L4 0.4L8 4.6Z" fill="#8c8c8c"/></svg>
<svg class="a" style="left:1900.5px;top:899px;" width="8" height="5" viewBox="0 0 8 5" preserveAspectRatio="none"><path d="M0 0.4L4 4.6L8 0.4Z" fill="#ffffff"/></svg>
<div class="a" style="left:1590px;top:74px;width:307px;height:1px;background:#3e4043;"></div>
<span id="t96" class="a m" style="left:1594.00px;top:77.00px;font-size:11px;line-height:16px;color:#e8eaed;"><i class="gr">element.style</i> <i style="font-style:inherit;color:#e8eaed">{</i></span>
<span id="t97" class="a m" style="left:1594.00px;top:93.00px;font-size:11px;line-height:16px;color:#e8eaed;">}</span>
<div class="a" style="left:1590px;top:111px;width:307px;height:1px;background:#3e4043;"></div>
<span id="t98" class="a m" style="left:1594.00px;top:114.00px;font-size:11px;line-height:16px;color:#e8eaed;">.stream_ui_161 <i style="font-style:inherit;color:#e8eaed">{</i></span>
<span id="t99" class="a m" style="left:1848.80px;top:114.00px;font-size:11px;line-height:16px;color:#9aa0a6;">&lt;style&gt;</span>
<span id="t100" class="a m" style="left:1612.30px;top:130.00px;font-size:11px;line-height:16px;color:#e8eaed;"><i class="pn">color</i><i class="pv">: </i></span>
<div class="a" style="left:1659.6999999999998px;top:132px;width:10px;height:10px;background:#6a6a6a;background-image:linear-gradient(45deg,#555 25%,transparent 25%,transparent 75%,#555 75%),linear-gradient(45deg,#555 25%,transparent 25%,transparent 75%,#555 75%);background-size:10px 10px;background-position:0 0,5px 5px;"></div>
<span id="t101" class="a m" style="left:1671.80px;top:130.00px;font-size:11px;line-height:16px;color:#e8eaed;">rgba(0, 0, 0, 0.54);</span>
<span id="t102" class="a m" style="left:1612.30px;top:144.00px;font-size:11px;line-height:16px;color:#e8eaed;"><i class="pn">font-size</i><i class="pv">: 0.75rem;</i></span>
<span id="t103" class="a m" style="left:1594.00px;top:158.00px;font-size:11px;line-height:16px;color:#e8eaed;">}</span>
<div class="a" style="left:1590px;top:176px;width:307px;height:1px;background:#3e4043;"></div>
<span id="t104" class="a m" style="left:1594.00px;top:179.00px;font-size:11px;line-height:16px;color:#e8eaed;">.MuiTypography-body1-126 <i style="font-style:inherit;color:#e8eaed">{</i></span>
<span id="t105" class="a m" style="left:1848.80px;top:179.00px;font-size:11px;line-height:16px;color:#9aa0a6;">&lt;style&gt;</span>
<span id="t106" class="a m" style="left:1612.30px;top:195.00px;font-size:11px;line-height:16px;color:#e8eaed;"><i class="pn">font-size</i><i class="pv">: 14px;</i></span>
<div class="a" style="left:1612.3px;top:202.5px;width:105.59999999999991px;height:1px;background:#d0d2d5;"></div>
<span id="t107" class="a m" style="left:1612.30px;top:209.00px;font-size:11px;line-height:16px;color:#e8eaed;"><i class="pn">font-family</i><i class="pv">: Lato;</i></span>
<span id="t108" class="a m" style="left:1612.30px;top:223.00px;font-size:11px;line-height:16px;color:#e8eaed;"><i class="pn">font-weight</i><i class="pv">: 400;</i></span>
<span id="t109" class="a m" style="left:1612.30px;top:237.00px;font-size:11px;line-height:16px;color:#e8eaed;"><i class="pn">line-height</i><i class="pv">: 1.5;</i></span>
<span id="t110" class="a m" style="left:1594.00px;top:251.00px;font-size:11px;line-height:16px;color:#e8eaed;">}</span>
<div class="a" style="left:1590px;top:269px;width:307px;height:1px;background:#3e4043;"></div>
<span id="t111" class="a m" style="left:1594.00px;top:272.00px;font-size:11px;line-height:16px;color:#e8eaed;">.MuiTypography-root-124 <i style="font-style:inherit;color:#e8eaed">{</i></span>
<span id="t112" class="a m" style="left:1848.80px;top:272.00px;font-size:11px;line-height:16px;color:#9aa0a6;">&lt;style&gt;</span>
<span id="t113" class="a m" style="left:1612.30px;top:288.00px;font-size:11px;line-height:16px;color:#e8eaed;"><i class="pn">margin</i><i class="pv">:</i></span>
<svg class="a" style="left:1661.9px;top:291.4px;" width="6" height="8" viewBox="0 0 6 8" preserveAspectRatio="none"><path d="M0 0L5.2 3.8L0 7.6Z" fill="#85888c"/></svg>
<span id="t114" class="a m" style="left:1671.40px;top:288.00px;font-size:11px;line-height:16px;color:#e8eaed;">0;</span>
<span id="t115" class="a m" style="left:1594.00px;top:302.00px;font-size:11px;line-height:16px;color:#e8eaed;">}</span>
<div class="a" style="left:1590px;top:320px;width:307px;height:1px;background:#3e4043;"></div>
<span id="t116" class="a m" style="left:1594.00px;top:323.00px;font-size:11px;line-height:16px;color:#e8eaed;">p <i style="font-style:inherit;color:#e8eaed">{</i></span>
<span id="t117" class="a m" style="left:1782.80px;top:323.00px;font-size:11px;line-height:16px;color:#d5d7da;text-decoration:underline;">bootstrap.css:651</span>
<span id="t118" class="a m" style="left:1612.30px;top:339.00px;font-size:11px;line-height:16px;color:#e8eaed;"><i class="pn">margin</i><i class="pv">:</i></span>
<svg class="a" style="left:1661.9px;top:342.4px;" width="6" height="8" viewBox="0 0 6 8" preserveAspectRatio="none"><path d="M0 0L5.2 3.8L0 7.6Z" fill="#85888c"/></svg>
<span id="t119" class="a m" style="left:1671.40px;top:339.00px;font-size:11px;line-height:16px;color:#e8eaed;">0 0 10px;</span>
<div class="a" style="left:1612.3px;top:346.5px;width:118.50000000000023px;height:1px;background:#d0d2d5;"></div>
<span id="t120" class="a m" style="left:1594.00px;top:353.00px;font-size:11px;line-height:16px;color:#e8eaed;">}</span>
<div class="a" style="left:1590px;top:371px;width:307px;height:1px;background:#3e4043;"></div>
<span id="t121" class="a m" style="left:1594.00px;top:374.00px;font-size:11px;line-height:16px;color:#e8eaed;">*, <i class="gr">*::before, *::after</i> <i style="font-style:inherit;color:#e8eaed">{</i></span>
<span id="t122" class="a m" style="left:1848.80px;top:374.00px;font-size:11px;line-height:16px;color:#9aa0a6;">&lt;style&gt;</span>
<span id="t123" class="a m" style="left:1612.30px;top:390.00px;font-size:11px;line-height:16px;color:#e8eaed;"><i class="pn">box-sizing</i><i class="pv">: inherit;</i></span>
<span id="t124" class="a m" style="left:1594.00px;top:404.00px;font-size:11px;line-height:16px;color:#e8eaed;">}</span>
<div class="a" style="left:1590px;top:422px;width:307px;height:1px;background:#3e4043;"></div>
<span id="t125" class="a m" style="left:1594.00px;top:425.00px;font-size:11px;line-height:16px;color:#e8eaed;">* <i style="font-style:inherit;color:#e8eaed">{</i></span>
<span id="t126" class="a m" style="left:1743.20px;top:425.00px;font-size:11px;line-height:16px;color:#d5d7da;text-decoration:underline;">admin.css?v…00a803:2012</span>
<span id="t127" class="a m" style="left:1612.30px;top:441.00px;font-size:11px;line-height:16px;color:#e8eaed;"><i class="pn">word-wrap</i><i class="pv">: break-word;</i></span>
<span id="t128" class="a m" style="left:1594.00px;top:455.00px;font-size:11px;line-height:16px;color:#e8eaed;">}</span>
<div class="a" style="left:1590px;top:473px;width:307px;height:1px;background:#3e4043;"></div>
<span id="t129" class="a m" style="left:1594.00px;top:476.00px;font-size:11px;line-height:16px;color:#e8eaed;font-style:italic;">p <i style="font-style:inherit;color:#e8eaed">{</i></span>
<span id="t130" class="a m" style="left:1756.40px;top:476.00px;font-size:11px;line-height:16px;color:#9aa0a6;font-style:italic;">user agent stylesheet</span>
<span id="t131" class="a m" style="left:1612.30px;top:492.00px;font-size:11px;line-height:16px;color:#e8eaed;font-style:italic;"><i class="pn">display</i><i class="pv">: block;</i></span>
<span id="t132" class="a m" style="left:1612.30px;top:506.00px;font-size:11px;line-height:16px;color:#e8eaed;font-style:italic;"><i class="pn">margin-block-start</i><i class="pv">: 1em;</i></span>
<span id="t133" class="a m" style="left:1612.30px;top:520.00px;font-size:11px;line-height:16px;color:#e8eaed;font-style:italic;"><i class="pn">margin-block-end</i><i class="pv">: 1em;</i></span>
<span id="t134" class="a m" style="left:1612.30px;top:534.00px;font-size:11px;line-height:16px;color:#e8eaed;font-style:italic;"><i class="pn">margin-inline-start</i><i class="pv">: 0px;</i></span>
<span id="t135" class="a m" style="left:1612.30px;top:548.00px;font-size:11px;line-height:16px;color:#e8eaed;font-style:italic;"><i class="pn">margin-inline-end</i><i class="pv">: 0px;</i></span>
<span id="t136" class="a m" style="left:1594.00px;top:562.00px;font-size:11px;line-height:16px;color:#e8eaed;font-style:italic;">}</span>
<div class="a" style="left:1590px;top:580px;width:307px;height:1px;background:#3e4043;"></div>
<div class="a" style="left:1590px;top:581px;width:307px;height:24.5px;background:#292a2d;"></div>
<span id="t137" class="a s" style="left:1595.30px;top:585.00px;font-size:12px;line-height:16px;color:#9aa0a6;letter-spacing:0.082px;">Inherited from</span>
<span id="t138" class="a m" style="left:1676.60px;top:587.00px;font-size:11px;line-height:16px;color:#3bc4b8;">div.MuiButtonBase-root-58.…</span>
<div class="a" style="left:1590px;top:605px;width:307px;height:1px;background:#3e4043;"></div>
<span id="t139" class="a m" style="left:1594.00px;top:608.00px;font-size:11px;line-height:16px;color:#e8eaed;">.MuiAccordionSummary-root-</span>
<span id="t140" class="a m" style="left:1848.80px;top:608.00px;font-size:11px;line-height:16px;color:#9aa0a6;">&lt;style&gt;</span>
<span id="t141" class="a m" style="left:1594.00px;top:622.00px;font-size:11px;line-height:16px;color:#e8eaed;">171:hover:not(.Mui-disabled) <i style="font-style:inherit;color:#e8eaed">{</i></span>
<span id="t142" class="a m" style="left:1612.30px;top:638.00px;font-size:11px;line-height:16px;color:#e8eaed;"><i class="pn">cursor</i><i class="pv">: pointer;</i></span>
<span id="t143" class="a m" style="left:1594.00px;top:652.00px;font-size:11px;line-height:16px;color:#e8eaed;">}</span>
<div class="a" style="left:1590px;top:670px;width:307px;height:1px;background:#3e4043;"></div>
<span id="t144" class="a m" style="left:1594.00px;top:673.00px;font-size:11px;line-height:16px;color:#e8eaed;">.MuiButtonBase-root-58 <i style="font-style:inherit;color:#e8eaed">{</i></span>
<span id="t145" class="a m" style="left:1848.80px;top:673.00px;font-size:11px;line-height:16px;color:#9aa0a6;">&lt;style&gt;</span>
<span id="t146" class="a m" style="left:1612.30px;top:689.00px;font-size:11px;line-height:16px;color:#e8eaed;"><i class="pn">color</i><i class="pv">: inherit;</i></span>
<div class="a" style="left:1612.3px;top:696.5px;width:99.0px;height:1px;background:#d0d2d5;"></div>
<span id="t147" class="a m" style="left:1612.30px;top:703.00px;font-size:11px;line-height:16px;color:#e8eaed;opacity:.55;"><i class="pn">border</i><i class="pv">:</i></span>
<svg class="a" style="left:1661.9px;top:706.4px;opacity:.55;" width="6" height="8" viewBox="0 0 6 8" preserveAspectRatio="none"><path d="M0 0L5.2 3.8L0 7.6Z" fill="#85888c"/></svg>
<span id="t148" class="a m" style="left:1671.40px;top:703.00px;font-size:11px;line-height:16px;color:#e8eaed;opacity:.55;">0;</span>
<span id="t149" class="a m" style="left:1612.30px;top:717.00px;font-size:11px;line-height:16px;color:#e8eaed;"><i class="pn">cursor</i><i class="pv">: pointer;</i></span>
<div class="a" style="left:1612.3px;top:724.5px;width:105.59999999999991px;height:1px;background:#d0d2d5;"></div>
<span id="t150" class="a m" style="left:1612.30px;top:731.00px;font-size:11px;line-height:16px;color:#e8eaed;opacity:.55;"><i class="pn">margin</i><i class="pv">:</i></span>
<svg class="a" style="left:1661.9px;top:734.4px;opacity:.55;" width="6" height="8" viewBox="0 0 6 8" preserveAspectRatio="none"><path d="M0 0L5.2 3.8L0 7.6Z" fill="#85888c"/></svg>
<span id="t151" class="a m" style="left:1671.40px;top:731.00px;font-size:11px;line-height:16px;color:#e8eaed;opacity:.55;">0;</span>
<span id="t152" class="a m" style="left:1612.30px;top:745.00px;font-size:11px;line-height:16px;color:#e8eaed;opacity:.55;"><i class="pn">display</i><i class="pv">: inline-flex;</i></span>
<span id="t153" class="a m" style="left:1612.30px;top:759.00px;font-size:11px;line-height:16px;color:#e8eaed;opacity:.55;"><i class="pn">outline</i><i class="pv">:</i></span>
<svg class="a" style="left:1668.5px;top:762.4px;opacity:.55;" width="6" height="8" viewBox="0 0 6 8" preserveAspectRatio="none"><path d="M0 0L5.2 3.8L0 7.6Z" fill="#85888c"/></svg>
<span id="t154" class="a m" style="left:1678.00px;top:759.00px;font-size:11px;line-height:16px;color:#e8eaed;opacity:.55;">0;</span>
<span id="t155" class="a m" style="left:1612.30px;top:773.00px;font-size:11px;line-height:16px;color:#e8eaed;opacity:.55;"><i class="pn">padding</i><i class="pv">:</i></span>
<svg class="a" style="left:1668.5px;top:776.4px;opacity:.55;" width="6" height="8" viewBox="0 0 6 8" preserveAspectRatio="none"><path d="M0 0L5.2 3.8L0 7.6Z" fill="#85888c"/></svg>
<span id="t156" class="a m" style="left:1678.00px;top:773.00px;font-size:11px;line-height:16px;color:#e8eaed;opacity:.55;">0;</span>
<span id="t157" class="a m" style="left:1612.30px;top:787.00px;font-size:11px;line-height:16px;color:#e8eaed;opacity:.55;"><i class="pn">position</i><i class="pv">: relative;</i></span>
<span id="t158" class="a m" style="left:1612.30px;top:801.00px;font-size:11px;line-height:16px;color:#e8eaed;opacity:.55;"><i class="pn">align-items</i><i class="pv">: center;</i></span>
<span id="t159" class="a m" style="left:1612.30px;top:815.00px;font-size:11px;line-height:16px;color:#e8eaed;"><i class="pn">user-select</i><i class="pv">: none;</i></span>
<span id="t160" class="a m" style="left:1612.30px;top:829.00px;font-size:11px;line-height:16px;color:#e8eaed;opacity:.55;"><i class="pn">border-radius</i><i class="pv">:</i></span>
<svg class="a" style="left:1708.1000000000001px;top:832.4px;opacity:.55;" width="6" height="8" viewBox="0 0 6 8" preserveAspectRatio="none"><path d="M0 0L5.2 3.8L0 7.6Z" fill="#85888c"/></svg>
<span id="t161" class="a m" style="left:1717.60px;top:829.00px;font-size:11px;line-height:16px;color:#e8eaed;opacity:.55;">0;</span>
<span id="t162" class="a m" style="left:1612.30px;top:843.00px;font-size:11px;line-height:16px;color:#e8eaed;opacity:.55;"><i class="pn">vertical-align</i><i class="pv">: middle;</i></span>
<span id="t163" class="a m" style="left:1612.30px;top:857.00px;font-size:11px;line-height:16px;color:#7d8085;opacity:.7;">-moz-appearance: none;</span>
<div class="a" style="left:1612.3px;top:864.5px;width:145.2px;height:1px;background:#6d7075;"></div>
<span id="t164" class="a m" style="left:1612.30px;top:871.00px;font-size:11px;line-height:16px;color:#e8eaed;opacity:.55;"><i class="pn">justify-content</i><i class="pv">: center;</i></span>
<span id="t165" class="a m" style="left:1612.30px;top:885.00px;font-size:11px;line-height:16px;color:#e8eaed;opacity:.55;"><i class="pn">text-decoration</i><i class="pv">:</i></span>
<svg class="a" style="left:1721.3px;top:888.4px;opacity:.55;" width="6" height="8" viewBox="0 0 6 8" preserveAspectRatio="none"><path d="M0 0L5.2 3.8L0 7.6Z" fill="#85888c"/></svg>
<span id="t166" class="a m" style="left:1730.80px;top:885.00px;font-size:11px;line-height:16px;color:#e8eaed;opacity:.55;">none;</span>
<span id="t167" class="a m" style="left:1612.30px;top:899.00px;font-size:11px;line-height:16px;color:#e8eaed;opacity:.55;"><i class="pn">background-color</i><i class="pv">: </i></span>
<div class="a" style="left:1732.3px;top:901px;width:10px;height:10px;background:#8a8c90;opacity:.55;background-image:linear-gradient(45deg,#55575b 25%,transparent 25%,transparent 75%,#55575b 75%),linear-gradient(45deg,#55575b 25%,transparent 25%,transparent 75%,#55575b 75%);background-size:10px 10px;background-position:0 0,5px 5px;"></div>
<span id="t168" class="a m" style="left:1744.40px;top:899.00px;font-size:11px;line-height:16px;color:#e8eaed;opacity:.55;">transparent;</span>
<span id="t169" class="a m" style="left:1594.00px;top:913.00px;font-size:11px;line-height:16px;color:#e8eaed;">}</span>
<div class="a" style="left:1756.3999999999999px;top:744.6px;width:15px;height:14.6px;background:#2e2f33;border-radius:2px;"></div>
<div class="a" style="left:1759.4999999999998px;top:747.9px;width:2.2px;height:3.2px;background:#85888c;"></div>
<div class="a" style="left:1759.4999999999998px;top:753.2px;width:2.2px;height:3.2px;background:#85888c;"></div>
<div class="a" style="left:1762.8999999999999px;top:747.9px;width:2.2px;height:3.2px;background:#85888c;"></div>
<div class="a" style="left:1762.8999999999999px;top:753.2px;width:2.2px;height:3.2px;background:#85888c;"></div>
<div class="a" style="left:1766.2999999999997px;top:747.9px;width:2.2px;height:3.2px;background:#85888c;"></div>
<div class="a" style="left:1766.2999999999997px;top:753.2px;width:2.2px;height:3.2px;background:#85888c;"></div>
<div class="a" style="left:687px;top:886px;width:901.6px;height:1px;background:#3e4043;"></div>
<div class="a" style="left:687px;top:887px;width:901.6px;height:23px;background:#222326;"></div>
<div class="a" style="left:687px;top:887px;width:28.8px;height:23px;background:#292a2d;"></div>
<div class="a" style="left:1560.3px;top:887px;width:28.3px;height:23px;background:#292a2d;"></div>
<span id="t170" class="a s" style="left:696.00px;top:891.00px;font-size:12px;line-height:16px;color:#c9ccd0;font-weight:bold;letter-spacing:0.561px;">...</span>
<span id="t171" class="a s" style="left:1568.60px;top:891.00px;font-size:12px;line-height:16px;color:#8d9196;font-weight:bold;letter-spacing:0.361px;">...</span>
<span id="t172" class="a s" style="left:711.20px;top:891.00px;font-size:12px;line-height:16px;color:#a3c3e0;letter-spacing:-0.018px;clip-path:inset(0 0 0 4.8px);">mmary-content-172.stream_ui_163</span>
<span id="t173" class="a s" style="left:911.60px;top:891.00px;font-size:12px;line-height:16px;color:#a3c3e0;letter-spacing:-0.036px;"><i style="font-style:normal;color:#5db0d7">div</i>.MuiAccordionDetails-root-174.stream_ui_159</span>
<div class="a" style="left:1175.7px;top:887px;width:384.6px;height:23px;background:#292a2d;"></div>
<span id="t174" class="a s" style="left:1183.40px;top:891.00px;font-size:12px;line-height:16px;color:#a3c3e0;letter-spacing:-0.007px;"><i style="font-style:normal;color:#5db0d7">p</i>.MuiTypography-root-124.stream_ui_161.MuiTypography-body1-126</span>
<div class="a" style="left:687px;top:910px;width:1224px;height:1px;background:#3e4043;"></div>
<div class="a" style="left:687px;top:911px;width:1224px;height:26px;background:#292a2d;"></div>
<div class="a" style="left:715px;top:911px;width:62px;height:26px;background:#000;"></div>
<div class="a" style="left:701.9px;top:918.2px;width:2.8px;height:2.8px;background:#9aa0a6;border-radius:50%;"></div>
<div class="a" style="left:701.9px;top:923.1px;width:2.8px;height:2.8px;background:#9aa0a6;border-radius:50%;"></div>
<div class="a" style="left:701.9px;top:928.0px;width:2.8px;height:2.8px;background:#9aa0a6;border-radius:50%;"></div>
<span id="t175" class="a s" style="left:724.50px;top:917.00px;font-size:12px;line-height:16px;color:#fff;letter-spacing:-0.204px;">Console</span>
<svg class="a" style="left:1893.2px;top:919.2px;" width="10" height="10" viewBox="0 0 10 10" preserveAspectRatio="none"><path d="M0.8 0.8L9.2 9.2M9.2 0.8L0.8 9.2" stroke="#c4c7cb" stroke-width="1.6"/></svg>
<div class="a" style="left:687px;top:937px;width:1224px;height:1px;background:#494c50;"></div>
<div class="a" style="left:687px;top:938px;width:1224px;height:26px;background:#292a2d;"></div>
<svg class="a" style="left:695px;top:945px;" width="16" height="14" viewBox="0 0 16 14" preserveAspectRatio="none"><rect x="0.7" y="0.7" width="14" height="12" fill="none" stroke="#9aa0a6" stroke-width="1.3"/><path d="M4.3 0.7V12.7" stroke="#9aa0a6" stroke-width="1.3"/><path d="M6.8 3.6V9.8L11.6 6.7Z" fill="#9aa0a6"/></svg>
<svg class="a" style="left:724px;top:944.5px;" width="15" height="15" viewBox="0 0 15 15" preserveAspectRatio="none"><circle cx="7.5" cy="7.5" r="5.6" fill="none" stroke="#9aa0a6" stroke-width="1.9"/><path d="M3.4 3.4L11.6 11.6" stroke="#9aa0a6" stroke-width="1.7"/></svg>
<div class="a" style="left:749.3px;top:943px;width:1px;height:17px;background:#494c50;"></div>
<span id="t176" class="a s" style="left:759.30px;top:944.00px;font-size:12px;line-height:16px;color:#bdc1c6;letter-spacing:0.271px;">top</span>
<svg class="a" style="left:783px;top:948.5px;" width="7" height="6" viewBox="0 0 7 6" preserveAspectRatio="none"><path d="M0 0H7L3.5 6Z" fill="#9aa0a6"/></svg>
<div class="a" style="left:799px;top:943px;width:1px;height:17px;background:#494c50;"></div>
<svg class="a" style="left:809px;top:945px;" width="17.5" height="13" viewBox="0 0 17.5 13" preserveAspectRatio="none"><path d="M0.6 6.5C3 2.4 5.8 0.8 8.75 0.8S14.5 2.4 16.9 6.5C14.5 10.6 11.7 12.2 8.75 12.2S3 10.6 0.6 6.5Z" fill="#9aa0a6"/><circle cx="8.75" cy="6.5" r="3.7" fill="#292a2d"/><circle cx="8.75" cy="6.5" r="2" fill="#9aa0a6"/></svg>
<div class="a" style="left:836.5px;top:943px;width:1px;height:17px;background:#494c50;"></div>
<div class="a" style="left:843.2px;top:941.8px;width:747.3px;height:19.4px;background:#202124;border:1px solid #4a4c50;box-sizing:border-box;"></div>
<span id="t177" class="a s" style="left:848.50px;top:945.00px;font-size:12px;line-height:16px;color:#8b9096;letter-spacing:-0.112px;">Filter</span>
<span id="t178" class="a s" style="left:1599.00px;top:944.00px;font-size:12px;line-height:16px;color:#bdc1c6;letter-spacing:-0.118px;">Default levels</span>
<svg class="a" style="left:1675px;top:948.5px;" width="7" height="6" viewBox="0 0 7 6" preserveAspectRatio="none"><path d="M0 0H7L3.5 6Z" fill="#9aa0a6"/></svg>
<div class="a" style="left:1692.3px;top:943px;width:1px;height:17px;background:#494c50;"></div>
<div class="a" style="left:1697.4px;top:941.4px;width:114.2px;height:19px;border:1px solid #4a4c50;border-radius:2px;box-sizing:border-box;"></div>
<span id="t179" class="a s" style="left:1706.60px;top:944.00px;font-size:12px;line-height:16px;color:#bdc1c6;letter-spacing:-0.459px;">2 Issues:</span>
<svg class="a" style="left:1756.4px;top:945.6px;" width="11.4" height="11.4" viewBox="0 0 11.4 11.4" preserveAspectRatio="none"><path d="M0.5 0.5H10.9V8.3H4.2L1.7 10.8V8.3H0.5Z" fill="#f29a38"/><rect x="5.1" y="1.9" width="1.3" height="3.4" fill="#292a2d"/><rect x="5.1" y="6" width="1.3" height="1.3" fill="#292a2d"/></svg>
<span id="t180" class="a s" style="left:1772.80px;top:944.00px;font-size:12px;line-height:16px;color:#bdc1c6;">1</span>
<svg class="a" style="left:1784.6px;top:945.6px;" width="11.4" height="11.4" viewBox="0 0 11.4 11.4" preserveAspectRatio="none"><path d="M0.5 0.5H10.9V8.3H4.2L1.7 10.8V8.3H0.5Z" fill="#1a73e8"/><rect x="2.4" y="2.4" width="6.6" height="1.2" fill="#292a2d"/><rect x="2.4" y="5" width="4.6" height="1.2" fill="#292a2d"/></svg>
<span id="t181" class="a s" style="left:1800.00px;top:944.00px;font-size:12px;line-height:16px;color:#bdc1c6;">1</span>
<div class="a" style="left:1822.4px;top:943px;width:1px;height:17px;background:#494c50;"></div>
<span id="t182" class="a s" style="left:1832.50px;top:944.00px;font-size:12px;line-height:16px;color:#7e8287;letter-spacing:0.019px;">2 hidden</span>
<svg class="a" style="left:1890px;top:943.3px;" width="16" height="16" viewBox="0 0 16 16" preserveAspectRatio="none"><path fill="#9aa0a6" d="M15.01 6.58L15.01 9.42L13.06 9.57L12.69 10.47L13.96 11.95L11.95 13.96L10.47 12.69L9.57 13.06L9.42 15.01L6.58 15.01L6.43 13.06L5.53 12.69L4.05 13.96L2.04 11.95L3.31 10.47L2.94 9.57L0.99 9.42L0.99 6.58L2.94 6.43L3.31 5.53L2.04 4.05L4.05 2.04L5.53 3.31L6.43 2.94L6.58 0.99L9.42 0.99L9.57 2.94L10.47 3.31L11.95 2.04L13.96 4.05L12.69 5.53L13.06 6.43Z"/><circle cx="8" cy="8" r="2.7" fill="#292a2d"/></svg>
</body></html>
